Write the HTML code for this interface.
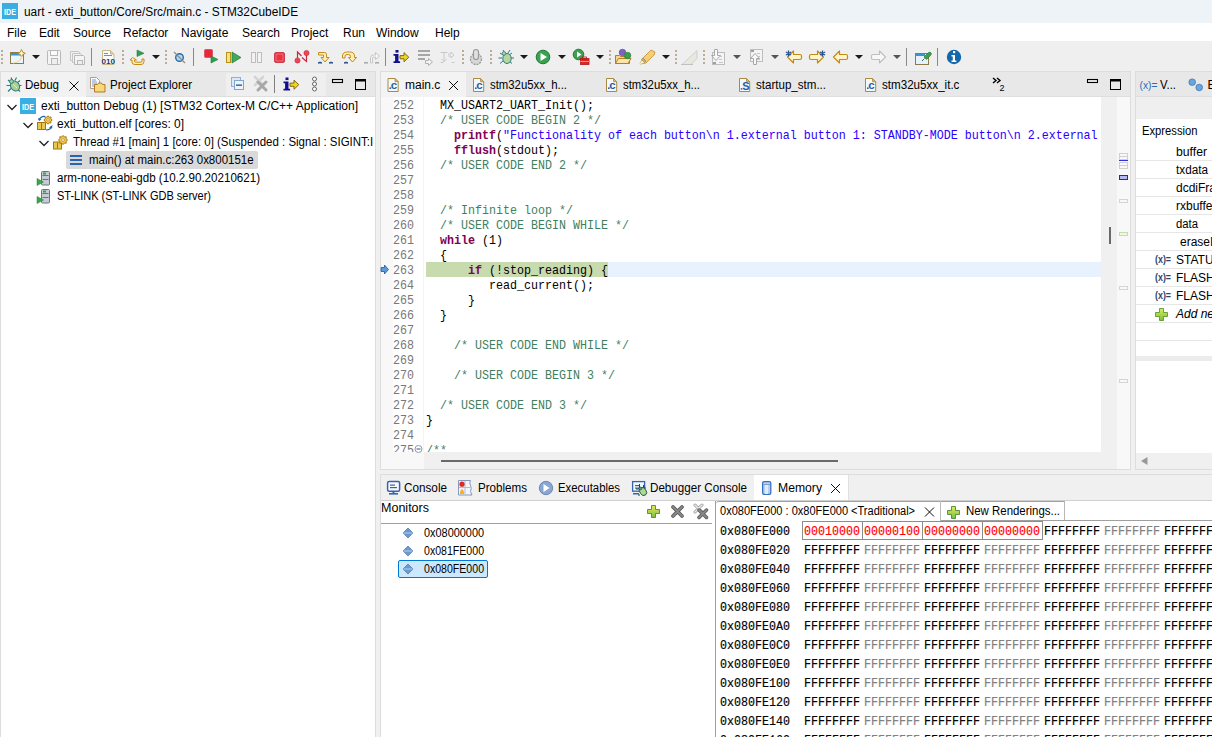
<!DOCTYPE html>
<html><head><meta charset="utf-8">
<style>
*{margin:0;padding:0;box-sizing:border-box}
html,body{width:1212px;height:737px;overflow:hidden;background:#f0f0f0;font-family:"Liberation Sans",sans-serif;font-size:12px;color:#000}
.a{position:absolute}
.t{position:absolute;white-space:pre;line-height:16px;font-size:12px}
.mb{position:absolute;white-space:pre;font-family:"Liberation Mono",monospace;font-size:11.9px;line-height:15px;transform:scaleX(0.9804);transform-origin:0 0;-webkit-text-stroke:0.15px currentColor}
.m{position:absolute;white-space:pre;font-family:"Liberation Mono",monospace;font-size:11.9px;line-height:15px;transform:scaleX(0.9804);transform-origin:0 0}
svg{position:absolute;overflow:visible}
</style></head><body>
<div class="a" style="left:0px;top:0px;width:1212px;height:23px;background:#eef3f8;"></div>
<div class="a" style="left:0px;top:23px;width:1212px;height:18px;background:#ffffff;"></div>
<div class="a" style="left:0px;top:41px;width:1212px;height:30px;background:#efefef;"></div>
<div class="a" style="left:2px;top:3px;width:16px;height:16px;background:#3aaee3;"></div>
<svg style="left:2px;top:3px;" width="16" height="16" viewBox="0 0 16 16"><text x="8" y="12" text-anchor="middle" font-family="Liberation Sans" font-weight="bold" font-size="8.5" fill="#fff" textLength="12" lengthAdjust="spacingAndGlyphs">IDE</text></svg>
<div class="t" style="left:24px;top:4px;transform:scaleX(0.9878);transform-origin:0 0;">uart - exti_button/Core/Src/main.c - STM32CubeIDE</div>
<div class="t" style="left:7px;top:25px;">File</div>
<div class="t" style="left:39px;top:25px;">Edit</div>
<div class="t" style="left:73px;top:25px;">Source</div>
<div class="t" style="left:123px;top:25px;">Refactor</div>
<div class="t" style="left:181px;top:25px;">Navigate</div>
<div class="t" style="left:242px;top:25px;">Search</div>
<div class="t" style="left:291px;top:25px;">Project</div>
<div class="t" style="left:343px;top:25px;">Run</div>
<div class="t" style="left:376px;top:25px;">Window</div>
<div class="t" style="left:435px;top:25px;">Help</div>
<div class="a" style="left:0px;top:71px;width:376px;height:700px;background:#fff;border:1px solid #dddddd"></div>
<div class="a" style="left:1px;top:72px;width:374px;height:25px;background:#e8e8e8;"></div>
<div class="a" style="left:1px;top:72px;width:85px;height:25px;background:#f2f2f2;"></div>
<div class="a" style="left:226px;top:73px;width:100px;height:23px;background:#efefef;"></div>
<div class="a" style="left:86px;top:96px;width:289px;height:1px;background:#dedede;"></div>
<div class="t" style="left:25px;top:77px;transform:scaleX(0.9616);transform-origin:0 0;">Debug</div>
<div class="t" style="left:110px;top:77px;transform:scaleX(0.9606);transform-origin:0 0;">Project Explorer</div>
<div class="a" style="left:66px;top:151px;width:192px;height:18px;background:#d9d9d9;border-radius:2px"></div>
<div class="t" style="left:41px;top:98px;transform:scaleX(1.0028);transform-origin:0 0;">exti_button Debug (1) [STM32 Cortex-M C/C++ Application]</div>
<div class="t" style="left:57px;top:116px;transform:scaleX(0.9973);transform-origin:0 0;">exti_button.elf [cores: 0]</div>
<div class="t" style="left:73px;top:134px;transform:scaleX(0.9554);transform-origin:0 0;">Thread #1 [main] 1 [core: 0] (Suspended : Signal : SIGINT:I</div>
<div class="t" style="left:89px;top:152px;transform:scaleX(0.9560);transform-origin:0 0;">main() at main.c:263 0x800151e</div>
<div class="t" style="left:57px;top:170px;transform:scaleX(0.9662);transform-origin:0 0;">arm-none-eabi-gdb (10.2.90.20210621)</div>
<div class="t" style="left:57px;top:188px;transform:scaleX(0.9166);transform-origin:0 0;">ST-LINK (ST-LINK GDB server)</div>
<div class="a" style="left:380px;top:71px;width:751px;height:399px;background:#fff;border:1px solid #dddddd"></div>
<div class="a" style="left:381px;top:72px;width:749px;height:25px;background:#e8e8e8;"></div>
<div class="a" style="left:381px;top:72px;width:85px;height:25px;background:#f3f3f3;"></div>
<div class="a" style="left:381px;top:97px;width:12px;height:355px;background:#f8f8f8;"></div>
<div class="a" style="left:423px;top:97px;width:1px;height:355px;background:#f4f4f4;"></div>
<div class="a" style="left:381px;top:452px;width:43px;height:17px;background:#f8f8f8;"></div>
<div class="a" style="left:424px;top:452px;width:677px;height:17px;background:#f0f0f0;"></div>
<div class="a" style="left:1101px;top:97px;width:16px;height:372px;background:#f0f0f0;"></div>
<div class="a" style="left:1117px;top:97px;width:13px;height:372px;background:#f8f8f8;"></div>
<div class="a" style="left:466px;top:96px;width:664px;height:1px;background:#dedede;"></div>
<div class="t" style="left:405px;top:77px;transform:scaleX(0.9988);transform-origin:0 0;">main.c</div>
<div class="t" style="left:490px;top:77px;transform:scaleX(0.9466);transform-origin:0 0;">stm32u5xx_h...</div>
<div class="t" style="left:623px;top:77px;transform:scaleX(0.9466);transform-origin:0 0;">stm32u5xx_h...</div>
<div class="t" style="left:756px;top:77px;transform:scaleX(0.9634);transform-origin:0 0;">startup_stm...</div>
<div class="t" style="left:882px;top:77px;transform:scaleX(0.9673);transform-origin:0 0;">stm32u5xx_it.c</div>
<div class="a" style="left:426px;top:262px;width:182px;height:15px;background:#c7dbaf;"></div>
<div class="a" style="left:608px;top:262px;width:493px;height:15px;background:#e8f2fe;"></div>
<div class="a" style="left:381px;top:97px;width:720px;height:355px;overflow:hidden">
<div class="m" style="left:12px;top:2px;width:21px;text-align:right;color:#787878">252</div>
<div class="m" style="left:45px;top:2px">  MX_USART2_UART_Init();</div>
<div class="m" style="left:12px;top:17px;width:21px;text-align:right;color:#787878">253</div>
<div class="m" style="left:45px;top:17px"><span style="color:#3f7f5f">  /* USER CODE BEGIN 2 */</span></div>
<div class="m" style="left:12px;top:32px;width:21px;text-align:right;color:#787878">254</div>
<div class="m" style="left:45px;top:32px">    <span style="color:#7f0055;font-weight:bold">printf</span>(<span style="color:#2a00ff">&quot;Functionality of each button\n 1.external button 1: STANDBY-MODE button\n 2.external</span></div>
<div class="m" style="left:12px;top:47px;width:21px;text-align:right;color:#787878">255</div>
<div class="m" style="left:45px;top:47px">    <span style="color:#7f0055;font-weight:bold">fflush</span>(stdout);</div>
<div class="m" style="left:12px;top:62px;width:21px;text-align:right;color:#787878">256</div>
<div class="m" style="left:45px;top:62px"><span style="color:#3f7f5f">  /* USER CODE END 2 */</span></div>
<div class="m" style="left:12px;top:77px;width:21px;text-align:right;color:#787878">257</div>
<div class="m" style="left:45px;top:77px"></div>
<div class="m" style="left:12px;top:92px;width:21px;text-align:right;color:#787878">258</div>
<div class="m" style="left:45px;top:92px"></div>
<div class="m" style="left:12px;top:107px;width:21px;text-align:right;color:#787878">259</div>
<div class="m" style="left:45px;top:107px"><span style="color:#3f7f5f">  /* Infinite loop */</span></div>
<div class="m" style="left:12px;top:122px;width:21px;text-align:right;color:#787878">260</div>
<div class="m" style="left:45px;top:122px"><span style="color:#3f7f5f">  /* USER CODE BEGIN WHILE */</span></div>
<div class="m" style="left:12px;top:137px;width:21px;text-align:right;color:#787878">261</div>
<div class="m" style="left:45px;top:137px">  <span style="color:#7f0055;font-weight:bold">while</span> (1)</div>
<div class="m" style="left:12px;top:152px;width:21px;text-align:right;color:#787878">262</div>
<div class="m" style="left:45px;top:152px">  {</div>
<div class="m" style="left:12px;top:167px;width:21px;text-align:right;color:#787878">263</div>
<div class="m" style="left:45px;top:167px">      <span style="color:#7f0055;font-weight:bold">if</span> (!stop_reading) {</div>
<div class="m" style="left:12px;top:182px;width:21px;text-align:right;color:#787878">264</div>
<div class="m" style="left:45px;top:182px">         read_current();</div>
<div class="m" style="left:12px;top:197px;width:21px;text-align:right;color:#787878">265</div>
<div class="m" style="left:45px;top:197px">      }</div>
<div class="m" style="left:12px;top:212px;width:21px;text-align:right;color:#787878">266</div>
<div class="m" style="left:45px;top:212px">  }</div>
<div class="m" style="left:12px;top:227px;width:21px;text-align:right;color:#787878">267</div>
<div class="m" style="left:45px;top:227px"></div>
<div class="m" style="left:12px;top:242px;width:21px;text-align:right;color:#787878">268</div>
<div class="m" style="left:45px;top:242px"><span style="color:#3f7f5f">    /* USER CODE END WHILE */</span></div>
<div class="m" style="left:12px;top:257px;width:21px;text-align:right;color:#787878">269</div>
<div class="m" style="left:45px;top:257px"></div>
<div class="m" style="left:12px;top:272px;width:21px;text-align:right;color:#787878">270</div>
<div class="m" style="left:45px;top:272px"><span style="color:#3f7f5f">    /* USER CODE BEGIN 3 */</span></div>
<div class="m" style="left:12px;top:287px;width:21px;text-align:right;color:#787878">271</div>
<div class="m" style="left:45px;top:287px"></div>
<div class="m" style="left:12px;top:302px;width:21px;text-align:right;color:#787878">272</div>
<div class="m" style="left:45px;top:302px"><span style="color:#3f7f5f">  /* USER CODE END 3 */</span></div>
<div class="m" style="left:12px;top:317px;width:21px;text-align:right;color:#787878">273</div>
<div class="m" style="left:45px;top:317px">}</div>
<div class="m" style="left:12px;top:332px;width:21px;text-align:right;color:#787878">274</div>
<div class="m" style="left:45px;top:332px"></div>
<div class="m" style="left:12px;top:347px;width:21px;text-align:right;color:#787878">275</div>
<div class="m" style="left:45px;top:347px"><span style="color:#3f7f5f">/**</span></div>
</div>
<div class="a" style="left:1135px;top:71px;width:100px;height:399px;background:#fff;border:1px solid #dddddd"></div>
<div class="a" style="left:1136px;top:72px;width:90px;height:25px;background:#e8e8e8;"></div>
<div class="a" style="left:1136px;top:96px;width:90px;height:1px;background:#dedede;"></div>
<div class="a" style="left:1136px;top:97px;width:90px;height:22px;background:#efefef;"></div>
<div class="t" style="left:1142px;top:123px;transform:scaleX(0.9350);transform-origin:0 0;">Expression</div>
<div class="a" style="left:1136px;top:160px;width:80px;height:1px;background:#e6e6e6;"></div>
<div class="a" style="left:1136px;top:178px;width:80px;height:1px;background:#e6e6e6;"></div>
<div class="a" style="left:1136px;top:196px;width:80px;height:1px;background:#e6e6e6;"></div>
<div class="a" style="left:1136px;top:214px;width:80px;height:1px;background:#e6e6e6;"></div>
<div class="a" style="left:1136px;top:232px;width:80px;height:1px;background:#e6e6e6;"></div>
<div class="a" style="left:1136px;top:250px;width:80px;height:1px;background:#e6e6e6;"></div>
<div class="a" style="left:1136px;top:268px;width:80px;height:1px;background:#e6e6e6;"></div>
<div class="a" style="left:1136px;top:286px;width:80px;height:1px;background:#e6e6e6;"></div>
<div class="a" style="left:1136px;top:304px;width:80px;height:1px;background:#e6e6e6;"></div>
<div class="a" style="left:1136px;top:322px;width:80px;height:1px;background:#e6e6e6;"></div>
<div class="a" style="left:1136px;top:340px;width:80px;height:1px;background:#e6e6e6;"></div>
<div class="a" style="left:1136px;top:356px;width:80px;height:5px;background:#ececec;"></div>
<div class="a" style="left:1136px;top:453px;width:80px;height:16px;background:#f0f0f0;"></div>
<svg style="left:1141px;top:457px;" width="7" height="8" viewBox="0 0 7 8"><path d="M6.5 0 L0 4 L6.5 8Z" fill="#999"/></svg>
<div class="t" style="left:1176px;top:144px;transform:scaleX(1.0180);transform-origin:0 0;">buffer</div>
<div class="t" style="left:1176px;top:162px;transform:scaleX(0.9794);transform-origin:0 0;">txdata</div>
<div class="t" style="left:1176px;top:180px;">dcdiFrame</div>
<div class="t" style="left:1176px;top:198px;">rxbuffer</div>
<div class="t" style="left:1176px;top:216px;transform:scaleX(0.9424);transform-origin:0 0;">data</div>
<div class="t" style="left:1180px;top:234px;">eraseInit</div>
<div class="t" style="left:1176px;top:252px;">STATUS_X</div>
<div class="t" style="left:1176px;top:270px;">FLASH_X</div>
<div class="t" style="left:1176px;top:288px;">FLASH_X</div>
<div class="t" style="left:1176px;top:306px;font-style:italic;">Add new expression</div>
<div class="a" style="left:380px;top:474px;width:850px;height:270px;background:#fff;border:1px solid #dddddd"></div>
<div class="a" style="left:381px;top:475px;width:840px;height:25px;background:#f0f0f0;"></div>
<div class="a" style="left:754px;top:475px;width:94px;height:25px;background:#ffffff;"></div>
<div class="a" style="left:848px;top:475px;width:1px;height:25px;background:#e0e0e0;"></div>
<div class="a" style="left:381px;top:500px;width:840px;height:1px;background:#cfcfcf;"></div>
<div class="t" style="left:404px;top:480px;transform:scaleX(0.9766);transform-origin:0 0;">Console</div>
<div class="t" style="left:478px;top:480px;transform:scaleX(0.9667);transform-origin:0 0;">Problems</div>
<div class="t" style="left:558px;top:480px;transform:scaleX(0.9486);transform-origin:0 0;">Executables</div>
<div class="t" style="left:650px;top:480px;transform:scaleX(0.9694);transform-origin:0 0;">Debugger Console</div>
<div class="t" style="left:778px;top:480px;transform:scaleX(1.0151);transform-origin:0 0;">Memory</div>
<div class="t" style="left:381px;top:500px;transform:scaleX(1.0431);transform-origin:0 0;">Monitors</div>
<div class="a" style="left:381px;top:523px;width:331px;height:1px;background:#a0a0a0;"></div>
<div class="a" style="left:398px;top:560px;width:90px;height:18px;background:#cce8ff;border:1px solid #0078d7;border-radius:2px"></div>
<div class="t" style="left:424px;top:525px;transform:scaleX(0.9084);transform-origin:0 0;">0x08000000</div>
<div class="t" style="left:424px;top:543px;transform:scaleX(0.8819);transform-origin:0 0;">0x081FE000</div>
<div class="t" style="left:424px;top:561px;transform:scaleX(0.8819);transform-origin:0 0;">0x080FE000</div>
<div class="a" style="left:715px;top:501px;width:500px;height:240px;background:#fff;border-left:1px solid #a0a0a0"></div>
<div class="a" style="left:716px;top:501px;width:225px;height:20px;background:#fff;border-top:1px solid #a0a0a0;border-right:1px solid #b8b8b8;border-top-left-radius:3px"></div>
<div class="a" style="left:941px;top:501px;width:124px;height:20px;background:#fff;border-top:1px solid #a0a0a0;border-right:1px solid #b8b8b8"></div>
<div class="a" style="left:941px;top:520px;width:280px;height:1px;background:#a0a0a0;"></div>
<div class="t" style="left:720px;top:503px;transform:scaleX(0.9184);transform-origin:0 0;">0x080FE000 : 0x80FE000 &lt;Traditional&gt;</div>
<div class="t" style="left:966px;top:503px;transform:scaleX(0.9524);transform-origin:0 0;">New Renderings...</div>
<div class="a" style="left:802px;top:521px;width:241px;height:19px;background:#fff;border:1px solid #8c8c8c"></div>
<div class="a" style="left:862px;top:521px;width:1px;height:19px;background:#8c8c8c;"></div>
<div class="a" style="left:922px;top:521px;width:1px;height:19px;background:#8c8c8c;"></div>
<div class="a" style="left:982px;top:521px;width:1px;height:19px;background:#8c8c8c;"></div>
<div class="mb" style="left:720px;top:525px">0x080FE000</div>
<div class="mb" style="left:804px;top:525px"><span style="color:#ff0000">00010000</span></div>
<div class="mb" style="left:864px;top:525px"><span style="color:#ff0000">00000100</span></div>
<div class="mb" style="left:924px;top:525px"><span style="color:#ff0000">00000000</span></div>
<div class="mb" style="left:984px;top:525px"><span style="color:#ff0000">00000000</span></div>
<div class="mb" style="left:1044px;top:525px"><span style="color:#000">FFFFFFFF</span></div>
<div class="mb" style="left:1104px;top:525px"><span style="color:#808080">FFFFFFFF</span></div>
<div class="mb" style="left:1164px;top:525px"><span style="color:#000">FFFFFFFF</span></div>
<div class="mb" style="left:720px;top:544px">0x080FE020</div>
<div class="mb" style="left:804px;top:544px"><span style="color:#000">FFFFFFFF</span></div>
<div class="mb" style="left:864px;top:544px"><span style="color:#808080">FFFFFFFF</span></div>
<div class="mb" style="left:924px;top:544px"><span style="color:#000">FFFFFFFF</span></div>
<div class="mb" style="left:984px;top:544px"><span style="color:#808080">FFFFFFFF</span></div>
<div class="mb" style="left:1044px;top:544px"><span style="color:#000">FFFFFFFF</span></div>
<div class="mb" style="left:1104px;top:544px"><span style="color:#808080">FFFFFFFF</span></div>
<div class="mb" style="left:1164px;top:544px"><span style="color:#000">FFFFFFFF</span></div>
<div class="mb" style="left:720px;top:563px">0x080FE040</div>
<div class="mb" style="left:804px;top:563px"><span style="color:#000">FFFFFFFF</span></div>
<div class="mb" style="left:864px;top:563px"><span style="color:#808080">FFFFFFFF</span></div>
<div class="mb" style="left:924px;top:563px"><span style="color:#000">FFFFFFFF</span></div>
<div class="mb" style="left:984px;top:563px"><span style="color:#808080">FFFFFFFF</span></div>
<div class="mb" style="left:1044px;top:563px"><span style="color:#000">FFFFFFFF</span></div>
<div class="mb" style="left:1104px;top:563px"><span style="color:#808080">FFFFFFFF</span></div>
<div class="mb" style="left:1164px;top:563px"><span style="color:#000">FFFFFFFF</span></div>
<div class="mb" style="left:720px;top:582px">0x080FE060</div>
<div class="mb" style="left:804px;top:582px"><span style="color:#000">FFFFFFFF</span></div>
<div class="mb" style="left:864px;top:582px"><span style="color:#808080">FFFFFFFF</span></div>
<div class="mb" style="left:924px;top:582px"><span style="color:#000">FFFFFFFF</span></div>
<div class="mb" style="left:984px;top:582px"><span style="color:#808080">FFFFFFFF</span></div>
<div class="mb" style="left:1044px;top:582px"><span style="color:#000">FFFFFFFF</span></div>
<div class="mb" style="left:1104px;top:582px"><span style="color:#808080">FFFFFFFF</span></div>
<div class="mb" style="left:1164px;top:582px"><span style="color:#000">FFFFFFFF</span></div>
<div class="mb" style="left:720px;top:601px">0x080FE080</div>
<div class="mb" style="left:804px;top:601px"><span style="color:#000">FFFFFFFF</span></div>
<div class="mb" style="left:864px;top:601px"><span style="color:#808080">FFFFFFFF</span></div>
<div class="mb" style="left:924px;top:601px"><span style="color:#000">FFFFFFFF</span></div>
<div class="mb" style="left:984px;top:601px"><span style="color:#808080">FFFFFFFF</span></div>
<div class="mb" style="left:1044px;top:601px"><span style="color:#000">FFFFFFFF</span></div>
<div class="mb" style="left:1104px;top:601px"><span style="color:#808080">FFFFFFFF</span></div>
<div class="mb" style="left:1164px;top:601px"><span style="color:#000">FFFFFFFF</span></div>
<div class="mb" style="left:720px;top:620px">0x080FE0A0</div>
<div class="mb" style="left:804px;top:620px"><span style="color:#000">FFFFFFFF</span></div>
<div class="mb" style="left:864px;top:620px"><span style="color:#808080">FFFFFFFF</span></div>
<div class="mb" style="left:924px;top:620px"><span style="color:#000">FFFFFFFF</span></div>
<div class="mb" style="left:984px;top:620px"><span style="color:#808080">FFFFFFFF</span></div>
<div class="mb" style="left:1044px;top:620px"><span style="color:#000">FFFFFFFF</span></div>
<div class="mb" style="left:1104px;top:620px"><span style="color:#808080">FFFFFFFF</span></div>
<div class="mb" style="left:1164px;top:620px"><span style="color:#000">FFFFFFFF</span></div>
<div class="mb" style="left:720px;top:639px">0x080FE0C0</div>
<div class="mb" style="left:804px;top:639px"><span style="color:#000">FFFFFFFF</span></div>
<div class="mb" style="left:864px;top:639px"><span style="color:#808080">FFFFFFFF</span></div>
<div class="mb" style="left:924px;top:639px"><span style="color:#000">FFFFFFFF</span></div>
<div class="mb" style="left:984px;top:639px"><span style="color:#808080">FFFFFFFF</span></div>
<div class="mb" style="left:1044px;top:639px"><span style="color:#000">FFFFFFFF</span></div>
<div class="mb" style="left:1104px;top:639px"><span style="color:#808080">FFFFFFFF</span></div>
<div class="mb" style="left:1164px;top:639px"><span style="color:#000">FFFFFFFF</span></div>
<div class="mb" style="left:720px;top:658px">0x080FE0E0</div>
<div class="mb" style="left:804px;top:658px"><span style="color:#000">FFFFFFFF</span></div>
<div class="mb" style="left:864px;top:658px"><span style="color:#808080">FFFFFFFF</span></div>
<div class="mb" style="left:924px;top:658px"><span style="color:#000">FFFFFFFF</span></div>
<div class="mb" style="left:984px;top:658px"><span style="color:#808080">FFFFFFFF</span></div>
<div class="mb" style="left:1044px;top:658px"><span style="color:#000">FFFFFFFF</span></div>
<div class="mb" style="left:1104px;top:658px"><span style="color:#808080">FFFFFFFF</span></div>
<div class="mb" style="left:1164px;top:658px"><span style="color:#000">FFFFFFFF</span></div>
<div class="mb" style="left:720px;top:677px">0x080FE100</div>
<div class="mb" style="left:804px;top:677px"><span style="color:#000">FFFFFFFF</span></div>
<div class="mb" style="left:864px;top:677px"><span style="color:#808080">FFFFFFFF</span></div>
<div class="mb" style="left:924px;top:677px"><span style="color:#000">FFFFFFFF</span></div>
<div class="mb" style="left:984px;top:677px"><span style="color:#808080">FFFFFFFF</span></div>
<div class="mb" style="left:1044px;top:677px"><span style="color:#000">FFFFFFFF</span></div>
<div class="mb" style="left:1104px;top:677px"><span style="color:#808080">FFFFFFFF</span></div>
<div class="mb" style="left:1164px;top:677px"><span style="color:#000">FFFFFFFF</span></div>
<div class="mb" style="left:720px;top:696px">0x080FE120</div>
<div class="mb" style="left:804px;top:696px"><span style="color:#000">FFFFFFFF</span></div>
<div class="mb" style="left:864px;top:696px"><span style="color:#808080">FFFFFFFF</span></div>
<div class="mb" style="left:924px;top:696px"><span style="color:#000">FFFFFFFF</span></div>
<div class="mb" style="left:984px;top:696px"><span style="color:#808080">FFFFFFFF</span></div>
<div class="mb" style="left:1044px;top:696px"><span style="color:#000">FFFFFFFF</span></div>
<div class="mb" style="left:1104px;top:696px"><span style="color:#808080">FFFFFFFF</span></div>
<div class="mb" style="left:1164px;top:696px"><span style="color:#000">FFFFFFFF</span></div>
<div class="mb" style="left:720px;top:715px">0x080FE140</div>
<div class="mb" style="left:804px;top:715px"><span style="color:#000">FFFFFFFF</span></div>
<div class="mb" style="left:864px;top:715px"><span style="color:#808080">FFFFFFFF</span></div>
<div class="mb" style="left:924px;top:715px"><span style="color:#000">FFFFFFFF</span></div>
<div class="mb" style="left:984px;top:715px"><span style="color:#808080">FFFFFFFF</span></div>
<div class="mb" style="left:1044px;top:715px"><span style="color:#000">FFFFFFFF</span></div>
<div class="mb" style="left:1104px;top:715px"><span style="color:#808080">FFFFFFFF</span></div>
<div class="mb" style="left:1164px;top:715px"><span style="color:#000">FFFFFFFF</span></div>
<div class="mb" style="left:720px;top:734px">0x080FE160</div>
<div class="mb" style="left:804px;top:734px"><span style="color:#000">FFFFFFFF</span></div>
<div class="mb" style="left:864px;top:734px"><span style="color:#808080">FFFFFFFF</span></div>
<div class="mb" style="left:924px;top:734px"><span style="color:#000">FFFFFFFF</span></div>
<div class="mb" style="left:984px;top:734px"><span style="color:#808080">FFFFFFFF</span></div>
<div class="mb" style="left:1044px;top:734px"><span style="color:#000">FFFFFFFF</span></div>
<div class="mb" style="left:1104px;top:734px"><span style="color:#808080">FFFFFFFF</span></div>
<div class="mb" style="left:1164px;top:734px"><span style="color:#000">FFFFFFFF</span></div>
<svg style="left:0;top:0" width="1212" height="737"><rect x="1" y="50" width="2" height="2" fill="#b9ad98"/><rect x="1" y="54" width="2" height="2" fill="#b9ad98"/><rect x="1" y="58" width="2" height="2" fill="#b9ad98"/><rect x="1" y="62" width="2" height="2" fill="#b9ad98"/><rect x="10.5" y="52.5" width="13" height="11" fill="#eaf5fc" stroke="#8c7a48"/><rect x="11" y="53" width="10" height="2.5" fill="#3a93d2"/><path d="M21.5 49.5 l1.2 2.6 2.6 1.2 -2.6 1.2 -1.2 2.6 -1.2 -2.6 -2.6 -1.2 2.6 -1.2z" fill="#fff6cc" stroke="#b8902a" stroke-width="1"/><path d="M13 63 q8 -1 9 -7" stroke="#f0dc9a" fill="none" stroke-width="1.2"/><path d="M32 55 h8 l-4 4z" fill="#1a1a1a"/><path d="M47.5 51.5 q0 -1 1 -1 h11 q1 0 1 1 v12 q0 1 -1 1 h-11 q-1 0 -1 -1z" fill="#f4f4f4" stroke="#b8b8b8"/><rect x="50.5" y="50.5" width="7" height="5" fill="#fafafa" stroke="#b8b8b8"/><rect x="51.5" y="58.5" width="6" height="6" fill="#eee" stroke="#b8b8b8"/><path d="M70.5 51.5 h8 l2 2 v7 h-10z" fill="#f2f2f2" stroke="#c4c4c4"/><path d="M72.5 53.5 h8 l2 2 v7 h-10z" fill="#f2f2f2" stroke="#c4c4c4"/><path d="M74.5 55.5 h9 l1 1 v8 h-10z" fill="#f4f4f4" stroke="#b8b8b8"/><rect x="77.5" y="60.5" width="5" height="4" fill="#eee" stroke="#b8b8b8"/><rect x="91" y="48" width="1" height="18" fill="#8a8a8a"/><path d="M102.5 50.5 h8 l3.5 3.5 v10.5 h-11.5z" fill="#f7fbff" stroke="#c8b989"/><path d="M110.5 50.5 v3.5 h3.5" fill="#e7d28a" stroke="#c8b989"/><rect x="104" y="53" width="4" height="1" fill="#7190c0"/><rect x="104" y="55" width="8" height="1" fill="#7190c0"/><text x="101.5" y="64" font-family="Liberation Sans" font-weight="bold" font-size="7" fill="#1f3b73" textLength="13.5" lengthAdjust="spacingAndGlyphs">010</text><rect x="122" y="50" width="2" height="2" fill="#b9ad98"/><rect x="122" y="54" width="2" height="2" fill="#b9ad98"/><rect x="122" y="58" width="2" height="2" fill="#b9ad98"/><rect x="122" y="62" width="2" height="2" fill="#b9ad98"/><path d="M137 50 v6.5 l7 -3.2z" fill="#2f9e4f" stroke="#238040" stroke-width=".6"/><path d="M132.5 57.5 l-2.5 2.5 h2 v2 q0 2.5 3 2.5 h6 q3 0 3 -3 v-2.5 h-2 v2.2 q0 1 -1 1 h-5.5 q-1 0 -1 -1 v-1.2 h2z" fill="#fff2c0" stroke="#c48a18" stroke-width="1"/><path d="M152 55 h8 l-4 4z" fill="#1a1a1a"/><rect x="165" y="50" width="2" height="2" fill="#b9ad98"/><rect x="165" y="54" width="2" height="2" fill="#b9ad98"/><rect x="165" y="58" width="2" height="2" fill="#b9ad98"/><rect x="165" y="62" width="2" height="2" fill="#b9ad98"/><circle cx="179.5" cy="57.5" r="3.8" fill="#bcd8ee" stroke="#1f6eae" stroke-width="1.4"/><path d="M174 52 L185 63" stroke="#8c8c8c" stroke-width="1.2"/><rect x="193" y="48" width="1" height="18" fill="#8a8a8a"/><rect x="204.5" y="49.5" width="8" height="8" rx="1" fill="#e8283a" stroke="#d9596a"/><path d="M211 56 v7 l7 -3.5z" fill="#2f9e4f" stroke="#227a3d" stroke-width=".6"/><rect x="226.5" y="52.5" width="4" height="10" fill="#f8e27a" stroke="#b8901c"/><path d="M232 52 v11 l9 -5.5z" fill="#43a85c" stroke="#227a3d" stroke-width=".7"/><rect x="251.5" y="52.5" width="4" height="10" fill="#f2f2f2" stroke="#bdbdbd"/><rect x="257.5" y="52.5" width="4" height="10" fill="#f2f2f2" stroke="#bdbdbd"/><rect x="274.5" y="52.5" width="10" height="10" rx="1.5" fill="#e8283a" stroke="#cf3c4c"/><rect x="276" y="54" width="7" height="7" fill="#ee3040" stroke="#f4a0a8" stroke-width=".6"/><path d="M297.5 60.5 L297.5 52 L301.5 56 M302 57.5 L306.5 61.5 L306.5 53" stroke="#c8283a" stroke-width="1.2" fill="none"/><circle cx="297.5" cy="60.5" r="2.6" fill="#e84858" stroke="#c8283a" stroke-width=".6"/><circle cx="306.5" cy="53" r="2.6" fill="#e84858" stroke="#c8283a" stroke-width=".6"/><path d="M318.5 52.5 h6 q2 0 2 2 v3 h2.5 l-4 4.5 l-4 -4.5 h2.5 v-2.5 h-5z" fill="#fff0b8" stroke="#c48a18"/><path d="M318 63 q2 -2 4 0z M329 63 q2 -2 4 0z" fill="#2a5590" stroke="#2a5590" stroke-width="1"/><path d="M342.5 58 v-2 q0 -4 5 -4 h2 q5 0 5 4 v1.5 h2 l-4 4.5 l-4 -4.5 h2 v-1 q0 -2 -2 -2 h-1.5 q-2 0 -2 2 v1.5z" fill="#fff0b8" stroke="#c48a18"/><path d="M344 63 q2 -2 4 0z" fill="#2a5590" stroke="#2a5590" stroke-width="1"/><path d="M370.5 63 v-5 q0 -3 3 -3 h2 v-2.5 l4 3.5 l-4 3.5 v-2.5 h-2 q-1 0 -1 1 v5z" fill="#f6f6f6" stroke="#c6c6c6"/><path d="M364 63 q2 -1.5 4 0z M375 63 q2 -1.5 4 0z" fill="#a8a8a8" stroke="#a8a8a8" stroke-width="1"/><rect x="385" y="48" width="1" height="18" fill="#8a8a8a"/><g transform="translate(393,50)"><rect x="2.5" y="0" width="3" height="2.6" fill="#10108c"/><path d="M0.5 4 h5 v7.2 h1.6 v1.8 h-6.6 v-1.8 h1.6 v-5.4 h-1.6z" fill="#10108c"/><path d="M7 5.6 h4 v-3 l4.8 4.6 l-4.8 4.6 v-3 h-4z" fill="#e8d820" stroke="#7a5a10" stroke-width=".9" stroke-linejoin="round"/></g><rect x="418" y="50" width="12" height="2" fill="#a6a6a6"/><rect x="418" y="54" width="12" height="2" fill="#a6a6a6"/><rect x="418" y="58" width="7" height="2" fill="#a6a6a6"/><path d="M425.5 60.5 h3 v-2 l4 3.5 l-4 3.5 v-2 h-3z" fill="#f4f4f4" stroke="#b0b0b0"/><path d="M440.5 52.5 h7 M444 52.5 v9 M441.5 59 l2.5 2.5 2.5 -2.5 M448 54 h3 v-2 l3 3 -3 3 v-2 h-3" stroke="#c8c8c8" fill="none"/><path d="M440 63 q2 -1.5 4 0z M451 63 q2 -1.5 4 0z" fill="#b0b0b0"/><rect x="462" y="50" width="2" height="2" fill="#b9ad98"/><rect x="462" y="54" width="2" height="2" fill="#b9ad98"/><rect x="462" y="58" width="2" height="2" fill="#b9ad98"/><rect x="462" y="62" width="2" height="2" fill="#b9ad98"/><circle cx="476" cy="59" r="5.5" fill="#d8d8d8" stroke="#9a9a9a" stroke-width="1.3" stroke-dasharray="2 1"/><rect x="473.5" y="49.5" width="5" height="10" rx="2.5" fill="#e0e0e0" stroke="#9a9a9a" stroke-width="1.2"/><rect x="490" y="50" width="2" height="2" fill="#b9ad98"/><rect x="490" y="54" width="2" height="2" fill="#b9ad98"/><rect x="490" y="58" width="2" height="2" fill="#b9ad98"/><rect x="490" y="62" width="2" height="2" fill="#b9ad98"/><g stroke="#2b7a86" stroke-width="1" fill="none"><path d="M500 53 l3 2 M512 53 l-3 2 M498.5 58 h3.5 M514 58 h-3.5 M500 63.5 l3 -2.5 M512 63.5 l-3 -2.5 M503 50 l2 3 M510 50 l-2 3"/></g><ellipse cx="507" cy="58.5" rx="4.2" ry="5" fill="#b6d6a0" stroke="#2b7a86" stroke-width="1"/><circle cx="504" cy="53.5" r="1.8" fill="#b6d6a0" stroke="#2b7a86" stroke-width=".8"/><path d="M520 55 h8 l-4 4z" fill="#1a1a1a"/><circle cx="543" cy="57" r="6.8" fill="#3aa150" stroke="#1f7a34" stroke-width="1"/><path d="M540.5 53 v8 l6.5 -4z" fill="#fff"/><path d="M558 55 h8 l-4 4z" fill="#1a1a1a"/><circle cx="578.5" cy="54.5" r="5.3" fill="#3aa150" stroke="#1f7a34" stroke-width="1"/><path d="M577 51.5 v6 l4.5 -3z" fill="#fff"/><rect x="580.5" y="58.5" width="8.5" height="6" fill="#e02424" stroke="#b01818" stroke-width=".8"/><rect x="582.5" y="57" width="4" height="2" fill="none" stroke="#b01818" stroke-width=".8"/><rect x="580.5" y="61" width="8.5" height="1" fill="#ff9090"/><path d="M596 55 h8 l-4 4z" fill="#1a1a1a"/><rect x="609" y="50" width="2" height="2" fill="#b9ad98"/><rect x="609" y="54" width="2" height="2" fill="#b9ad98"/><rect x="609" y="58" width="2" height="2" fill="#b9ad98"/><rect x="609" y="62" width="2" height="2" fill="#b9ad98"/><path d="M615.5 55.5 h4 l1 1 h9 v7 h-14z" fill="#f6d58a" stroke="#b97a2a"/><path d="M615.5 63.5 l3 -5 h12.5 l-3 5z" fill="#fbe6a8" stroke="#b97a2a"/><circle cx="622.5" cy="52.5" r="3.3" fill="#7d64c0" stroke="#5a4598" stroke-width=".6"/><circle cx="627.5" cy="55.5" r="3.3" fill="#3a9e4a" stroke="#2a7a38" stroke-width=".6"/><path d="M640 64 l3 -6 l8 -8 l4 2 l-1 3 l-8 8z" fill="#f6d070" stroke="#c08a30" stroke-width=".8"/><path d="M643 58 l3 3 l-1.5 1.5 l-3 -3z" fill="#b0b0b0" stroke="#907850" stroke-width=".6"/><path d="M639.5 64.5 l2.5 -4 l2 2z" fill="#fff8c8"/><path d="M662 55 h8 l-4 4z" fill="#1a1a1a"/><rect x="675" y="50" width="2" height="2" fill="#b9ad98"/><rect x="675" y="54" width="2" height="2" fill="#b9ad98"/><rect x="675" y="58" width="2" height="2" fill="#b9ad98"/><rect x="675" y="62" width="2" height="2" fill="#b9ad98"/><path d="M682 64.5 h9 l6 -6 v-8 z" fill="#e8e8e0" stroke="#c8c8c8" stroke-width=".8"/><path d="M681 64.5 h12" stroke="#c0c0c0"/><rect x="703" y="50" width="2" height="2" fill="#b9ad98"/><rect x="703" y="54" width="2" height="2" fill="#b9ad98"/><rect x="703" y="58" width="2" height="2" fill="#b9ad98"/><rect x="703" y="62" width="2" height="2" fill="#b9ad98"/><rect x="712.5" y="52.5" width="12" height="12" fill="#f4f4f4" stroke="#bdbdbd"/><path d="M714.5 49.5 h3 v6 h3 l-4.5 5 l-4.5 -5 h3z" fill="#f8f8f8" stroke="#a8a8a8"/><rect x="713" y="62" width="3" height="2" fill="#a0a0a0"/><path d="M719 56.5 h3 M719 59.5 h3 M719 62.5 h4" stroke="#c6c6c6"/><path d="M733 55 h8 l-4 4z" fill="#555"/><rect x="750.5" y="49.5" width="12" height="12" fill="#f4f4f4" stroke="#bdbdbd"/><path d="M753.5 64.5 h3 v-6 h3 l-4.5 -5 l-4.5 5 h3z" fill="#f8f8f8" stroke="#a8a8a8"/><rect x="751" y="50" width="3" height="2" fill="#a0a0a0"/><path d="M757 53.5 h3 M757 56.5 h3 M757 59.5 h3" stroke="#c6c6c6"/><path d="M771 55 h8 l-4 4z" fill="#555"/><path d="M787.5 57 l6 -6 v3.5 h6.5 q1.5 0 1.5 1.5 v2 q0 1.5 -1.5 1.5 h-6.5 v3.5z" fill="#fff4c8" stroke="#c48a18" stroke-width="1.2" stroke-linejoin="round"/><path d="M788.5 50.5 v6 M785.9 52.0 l5.2 3 M785.9 55.0 l5.2 -3" stroke="#2a5590" stroke-width="1.3"/><path d="M823.5 57 l-6 -6 v3.5 h-6.5 q-1.5 0 -1.5 1.5 v2 q0 1.5 1.5 1.5 h6.5 v3.5z" fill="#fff4c8" stroke="#c48a18" stroke-width="1.2" stroke-linejoin="round"/><path d="M822.5 50.5 v6 M819.9 52.0 l5.2 3 M819.9 55.0 l5.2 -3" stroke="#2a5590" stroke-width="1.3"/><path d="M833.5 57 l6 -6 v3.5 h6.5 q1.5 0 1.5 1.5 v2 q0 1.5 -1.5 1.5 h-6.5 v3.5z" fill="#fff4c8" stroke="#c48a18" stroke-width="1.2" stroke-linejoin="round"/><path d="M855 55 h8 l-4 4z" fill="#1a1a1a"/><path d="M885.5 57 l-6 -6 v3.5 h-6.5 q-1.5 0 -1.5 1.5 v2 q0 1.5 1.5 1.5 h6.5 v3.5z" fill="#f8f8f8" stroke="#c0c0c0" stroke-width="1.2" stroke-linejoin="round"/><path d="M893 55 h8 l-4 4z" fill="#555"/><rect x="906" y="48" width="1" height="18" fill="#8a8a8a"/><rect x="915.5" y="53.5" width="13" height="11" fill="#e4f2fb" stroke="#8c7a48"/><rect x="916" y="54" width="9" height="2" fill="#3a93d2"/><path d="M924 57 l4 -4 l2 -1 l1.5 1.5 l-1 2 l-4 4z" fill="#3aa04a" stroke="#1f7a34" stroke-width=".7"/><path d="M922 61 l2.5 -2.5" stroke="#333" stroke-width=".8"/><rect x="937" y="48" width="1" height="18" fill="#8a8a8a"/><circle cx="954" cy="57" r="7.2" fill="#1567ab"/><rect x="953" y="51" width="2.2" height="2.2" fill="#fff"/><path d="M951.5 55 h3.5 v5.5 h1.3 v1.5 h-4.8 v-1.5 h1.3 v-4 h-1.3z" fill="#fff"/><g transform="translate(6,77)"><g stroke="#2b7a86" stroke-width="1.1" fill="none"><path d="M2 3 l3 2.5 M14 3.5 l-3 2.5 M0.5 8.5 h4 M15.5 8.5 h-4 M2 14.5 l3 -3 M14 14.5 l-3 -3 M5 0.5 l1.5 3 M10.5 0.5 l-1.5 3"/></g><ellipse cx="9" cy="9" rx="4.3" ry="5.3" transform="rotate(-35 9 9)" fill="#a8d090" stroke="#2b7a86" stroke-width="1"/><circle cx="5.5" cy="4.5" r="2" fill="#a8d090" stroke="#2b7a86" stroke-width=".9"/><path d="M7 7 l4 4" stroke="#d8ecc8" stroke-width="1"/></g><path d="M69.5 81.5 L78.5 90.5 M78.5 81.5 L69.5 90.5" stroke="#000" stroke-width="0.95"/><path d="M90.5 77.5 h6 l3 3 v8 h-9z" fill="#f8fbff" stroke="#b0a080"/><path d="M92 80 h4 M92 82 h5 M92 84 h5 M92 86 h5" stroke="#5a80c0" stroke-width=".8"/><path d="M94.5 84.5 h3 l1 -1.5 h3 l1 1.5 h2.5 v7.5 h-10.5z" fill="#f8d878" stroke="#b07828"/><rect x="231.5" y="77.5" width="9" height="9" fill="#dfe9f5" stroke="#8eb0d8"/><rect x="234.5" y="80.5" width="9" height="9" fill="#eef4fb" stroke="#7ea4d0"/><rect x="236" y="84.5" width="6" height="1.3" fill="#1f4f98"/><path d="M255 77 l8 8 M263 77 l-8 8" stroke="#d4d4d4" stroke-width="2.6" stroke-linecap="round"/><path d="M258 82 l8 8 M266 82 l-8 8" stroke="#a8a8a8" stroke-width="3" stroke-linecap="round"/><rect x="274" y="75" width="1" height="18" fill="#808080"/><g transform="translate(283,77.5)"><rect x="2.5" y="0" width="3" height="2.6" fill="#10108c"/><path d="M0.5 4 h5 v7.2 h1.6 v1.8 h-6.6 v-1.8 h1.6 v-5.4 h-1.6z" fill="#10108c"/><path d="M7 5.6 h4 v-3 l4.8 4.6 l-4.8 4.6 v-3 h-4z" fill="#e8d820" stroke="#7a5a10" stroke-width=".9" stroke-linejoin="round"/></g><circle cx="314.5" cy="79" r="2" fill="#fff" stroke="#666" stroke-width="1"/><circle cx="314.5" cy="84" r="2" fill="#fff" stroke="#666" stroke-width="1"/><circle cx="314.5" cy="89" r="2" fill="#fff" stroke="#666" stroke-width="1"/><rect x="332.5" y="79.5" width="10" height="3" fill="none" stroke="#000" stroke-width="1.1"/><rect x="355.5" y="79.5" width="10" height="10" fill="none" stroke="#000" stroke-width="1"/><rect x="355" y="80" width="11" height="1.5" fill="#000"/><path d="M7.5 105 l4.5 4.5 l4.5 -4.5" stroke="#222" stroke-width="1.3" fill="none"/><rect x="20" y="98" width="16" height="16" fill="#3aaee3"/><text x="28" y="109.5" text-anchor="middle" font-family="Liberation Sans" font-weight="bold" font-size="8.5" fill="#fff" textLength="12" lengthAdjust="spacingAndGlyphs">IDE</text><path d="M23.5 123 l4.5 4.5 l4.5 -4.5" stroke="#222" stroke-width="1.3" fill="none"/><rect x="37.5" y="122.5" width="8" height="7" fill="#e8c850" stroke="#9a7a18"/><rect x="41" y="123" width="1" height="6" fill="#9a7a18"/><polygon points="52.20,120.00 50.79,121.16 50.97,122.97 49.16,122.79 48.00,124.20 46.84,122.79 45.03,122.97 45.21,121.16 43.80,120.00 45.21,118.84 45.03,117.03 46.84,117.21 48.00,115.80 49.16,117.21 50.97,117.03 50.79,118.84" fill="#f5c842" stroke="#a07010" stroke-width=".9" stroke-linejoin="round"/><circle cx="48" cy="120" r="1.26" fill="#fff" stroke="#a07010" stroke-width=".6"/><path d="M39 120 q2 -4 6 -3.5" stroke="#1f5fa8" stroke-width="1.2" fill="none"/><path d="M38 118 l1 3 l2.5 -1.5z" fill="#1f5fa8"/><path d="M46 130 q4 0 5.5 -3" stroke="#1f5fa8" stroke-width="1.2" fill="none"/><path d="M52.5 125 l-0.5 3.5 l-3 -1z" fill="#1f5fa8"/><path d="M39.5 141 l4.5 4.5 l4.5 -4.5" stroke="#222" stroke-width="1.3" fill="none"/><rect x="53.5" y="142.0" width="8" height="7" fill="#e8c850" stroke="#9a7a18"/><rect x="57" y="142.5" width="1" height="6" fill="#9a7a18"/><polygon points="67.60,140.00 66.06,141.27 66.25,143.25 64.27,143.06 63.00,144.60 61.73,143.06 59.75,143.25 59.94,141.27 58.40,140.00 59.94,138.73 59.75,136.75 61.73,136.94 63.00,135.40 64.27,136.94 66.25,136.75 66.06,138.73" fill="#f5c842" stroke="#a07010" stroke-width=".9" stroke-linejoin="round"/><circle cx="63" cy="140" r="1.38" fill="#fff" stroke="#a07010" stroke-width=".6"/><rect x="70" y="155" width="12" height="2" fill="#2a64b0"/><rect x="70" y="159" width="12" height="2" fill="#2a64b0"/><rect x="70" y="163" width="12" height="2" fill="#2a64b0"/><g transform="translate(37,171)"><rect x="4.5" y="0.5" width="8" height="13.5" rx="1" fill="#c4ccd4" stroke="#6a7480"/><rect x="5.5" y="4" width="6" height="1" fill="#6a7480"/><rect x="5.5" y="8" width="6" height="1" fill="#6a7480"/><rect x="6" y="1.5" width="3" height="2" fill="#40a050"/><path d="M0 7.5 v7 l6.5 -3.5z" fill="#3aa84a" stroke="#208030" stroke-width=".5"/></g><g transform="translate(37,189)"><rect x="4.5" y="0.5" width="8" height="13.5" rx="1" fill="#c4ccd4" stroke="#6a7480"/><rect x="5.5" y="4" width="6" height="1" fill="#6a7480"/><rect x="5.5" y="8" width="6" height="1" fill="#6a7480"/><rect x="6" y="1.5" width="3" height="2" fill="#40a050"/><path d="M0 7.5 v7 l6.5 -3.5z" fill="#3aa84a" stroke="#208030" stroke-width=".5"/></g><g transform="translate(387.5,78)"><path d="M0.5 0.5 h7 l3.2 3.2 v9.8 h-10.2z" fill="#f4f8fd" stroke="#a88a40"/><path d="M7.5 0.5 v3.2 h3.2z" fill="#e0c070" stroke="#a88a40" stroke-width=".8"/><rect x="2" y="9.4" width="1.6" height="1.6" fill="#2a5fa0"/><text x="3.2" y="11" font-family="Liberation Sans" font-weight="bold" font-size="11.5" fill="#2a5fa0">c</text></g><path d="M449 81 L458 90 M458 81 L449 90" stroke="#000" stroke-width="0.95"/><g transform="translate(473,78)"><path d="M0.5 0.5 h7 l3.2 3.2 v9.8 h-10.2z" fill="#f4f8fd" stroke="#a88a40"/><path d="M7.5 0.5 v3.2 h3.2z" fill="#e0c070" stroke="#a88a40" stroke-width=".8"/><rect x="2" y="9.4" width="1.6" height="1.6" fill="#2a5fa0"/><text x="3.2" y="11" font-family="Liberation Sans" font-weight="bold" font-size="11.5" fill="#2a5fa0">c</text></g><g transform="translate(606,78)"><path d="M0.5 0.5 h7 l3.2 3.2 v9.8 h-10.2z" fill="#f4f8fd" stroke="#a88a40"/><path d="M7.5 0.5 v3.2 h3.2z" fill="#e0c070" stroke="#a88a40" stroke-width=".8"/><rect x="2" y="9.4" width="1.6" height="1.6" fill="#2a5fa0"/><text x="3.2" y="11" font-family="Liberation Sans" font-weight="bold" font-size="11.5" fill="#2a5fa0">c</text></g><g transform="translate(739,78)"><path d="M0.5 0.5 h7 l3.2 3.2 v9.8 h-10.2z" fill="#f4f8fd" stroke="#a88a40"/><path d="M7.5 0.5 v3.2 h3.2z" fill="#e0c070" stroke="#a88a40" stroke-width=".8"/><rect x="1.8" y="10.2" width="1.5" height="1.5" fill="#2a5fa0"/><text x="3.2" y="11.8" font-family="Liberation Sans" font-weight="bold" font-size="11" fill="#2a5fa0">S</text></g><g transform="translate(865,78)"><path d="M0.5 0.5 h7 l3.2 3.2 v9.8 h-10.2z" fill="#f4f8fd" stroke="#a88a40"/><path d="M7.5 0.5 v3.2 h3.2z" fill="#e0c070" stroke="#a88a40" stroke-width=".8"/><rect x="2" y="9.4" width="1.6" height="1.6" fill="#2a5fa0"/><text x="3.2" y="11" font-family="Liberation Sans" font-weight="bold" font-size="11.5" fill="#2a5fa0">c</text></g><path d="M993 78 l3 2.5 l-3 2.5 M997 78 l3 2.5 l-3 2.5" stroke="#000" stroke-width="1.4" fill="none"/><text x="999.5" y="91" font-family="Liberation Sans" font-size="9" fill="#000">2</text><rect x="1087.5" y="79.5" width="10" height="3" fill="none" stroke="#000" stroke-width="1.1"/><rect x="1110.5" y="79.5" width="10" height="10" fill="none" stroke="#000" stroke-width="1"/><rect x="1110" y="80" width="11" height="1.5" fill="#000"/><text x="1139.5" y="89" font-family="Liberation Sans" font-size="11" fill="#2a6eb8" textLength="18" lengthAdjust="spacingAndGlyphs">(x)=</text><text x="1160" y="89" font-family="Liberation Sans" font-size="12" fill="#000" textLength="16" lengthAdjust="spacingAndGlyphs">V...</text><circle cx="1192.2" cy="82.2" r="3.3" fill="#6aa6dc" stroke="#3a78b8" stroke-width=".8"/><circle cx="1199.2" cy="87.5" r="3.3" fill="#6aa6dc" stroke="#3a78b8" stroke-width=".8"/><text x="1207.5" y="89" font-family="Liberation Sans" font-size="12" fill="#000">B</text><text x="1155" y="263" font-family="Liberation Sans" font-weight="bold" font-size="10" fill="#2c4670" textLength="16" lengthAdjust="spacingAndGlyphs">(x)=</text><text x="1155" y="281" font-family="Liberation Sans" font-weight="bold" font-size="10" fill="#2c4670" textLength="16" lengthAdjust="spacingAndGlyphs">(x)=</text><text x="1155" y="299" font-family="Liberation Sans" font-weight="bold" font-size="10" fill="#2c4670" textLength="16" lengthAdjust="spacingAndGlyphs">(x)=</text><path d="M1159.5 308.5 h4 v4 h4 v4 h-4 v4 h-4 v-4 h-4 v-4 h4z" fill="url(#gp)" stroke="#5a9a30" stroke-width=".9"/><rect x="1109" y="227" width="2" height="17" fill="#6a6a6a"/><rect x="441" y="460" width="397" height="2" fill="#6a6a6a"/><rect x="1119.5" y="153.5" width="8" height="3" fill="none" stroke="#d0d0d0"/><rect x="1119.5" y="156.5" width="8" height="3" fill="none" stroke="#d0d0d0"/><rect x="1119" y="160" width="9" height="1" fill="#3030e0"/><rect x="1119.5" y="162.5" width="8" height="3" fill="none" stroke="#d0d0d0"/><rect x="1119.5" y="165.5" width="8" height="3" fill="none" stroke="#d0d0d0"/><rect x="1119.5" y="175.5" width="8" height="4" fill="#b8b8f0" stroke="#2020e0"/><rect x="1119.5" y="199.5" width="8" height="3" fill="none" stroke="#d4d4d4"/><rect x="1119.5" y="232.5" width="8" height="3" fill="#eef6e4" stroke="#c4dcb0"/><rect x="1119.5" y="286.5" width="8" height="3" fill="none" stroke="#d4d4d4"/><rect x="1119.5" y="379.5" width="8" height="3" fill="none" stroke="#d4d4d4"/><path d="M381 267.5 h3.5 v-2.5 l4 4.5 l-4 4.5 v-2.5 h-3.5z" fill="#5d9ad6" stroke="#1f5aa0" stroke-width=".8"/><circle cx="418.5" cy="449" r="3.5" fill="#fff" stroke="#8090a8" stroke-width=".9"/><rect x="416.5" y="448.5" width="4" height="1" fill="#405070"/><rect x="387.6" y="481.6" width="12" height="9.6" rx="1.5" fill="#f4fbff" stroke="#3a62b0" stroke-width="1.5"/><rect x="390" y="484.5" width="5" height="1.2" fill="#4a5aa0"/><rect x="390" y="487" width="7" height="1.2" fill="#4a5aa0"/><rect x="389" y="493" width="9" height="1.6" fill="#3a62b0"/><rect x="392.5" y="491" width="2" height="2" fill="#3a62b0"/><path d="M458.5 480.5 h12 q-1.5 2 0 5 q1.5 3 0 6 l1.5 3.5 h-13.5z" fill="#f0f6fc" stroke="#8898b8"/><path d="M465 481 v13 M459 487.5 h11" stroke="#a8b8d0" stroke-width=".9"/><circle cx="462" cy="484.2" r="2.6" fill="#e02828"/><path d="M459.8 494 l0.5 -3 l1.7 -2 l1.7 2 l0.5 3z" fill="#f8b020"/><circle cx="546" cy="488" r="6.7" fill="#8aa6d2" stroke="#5a78a8" stroke-width=".8"/><path d="M543.5 484 v8 l6 -4z" fill="#fff"/><rect x="632.6" y="481.6" width="12" height="9.6" fill="#eefaff" stroke="#3a62b0" stroke-width="1.3"/><rect x="635" y="485" width="4" height="1.2" fill="#4a5aa0"/><rect x="635" y="487.5" width="4" height="1.2" fill="#4a5aa0"/><rect x="633" y="493" width="6" height="1.5" fill="#3a62b0"/><path d="M639.5 484 v4 M643.5 485 v3 M636 489 h3 M639 496 v-2 M646 488 h-2" stroke="#1a4a40" stroke-width="1"/><ellipse cx="643" cy="491.5" rx="3.2" ry="4.3" transform="rotate(-35 643 491.5)" fill="#b0d890" stroke="#1a5a50" stroke-width=".9"/><circle cx="640.5" cy="488.5" r="1.4" fill="#50a060" stroke="#1a4a40" stroke-width=".6"/><rect x="762.6" y="481.6" width="8.2" height="12.8" rx="1.6" fill="#b8d0f0" stroke="#3a70c0" stroke-width="1.3"/><rect x="765" y="485" width="3" height="9" fill="#e0ecfa"/><path d="M763.5 484.5 h6.5" stroke="#6a90d0" stroke-width=".8"/><path d="M831 484 L840 493 M840 484 L831 493" stroke="#000" stroke-width="0.95"/><defs><linearGradient id="gp" x1="0" y1="0" x2="0" y2="1"><stop offset="0" stop-color="#e8e858"/><stop offset="1" stop-color="#78c040"/></linearGradient></defs><path d="M651.5 505.5 h4 v4 h4 v4 h-4 v4 h-4 v-4 h-4 v-4 h4z" fill="url(#gp)" stroke="#4a8a3a" stroke-width=".9"/><path d="M673 507 l9 9 M682 507 l-9 9" stroke="#555" stroke-width="3.6" stroke-linecap="round"/><path d="M673 507 l9 9 M682 507 l-9 9" stroke="#888" stroke-width="2" stroke-linecap="round"/><path d="M695 505 l7 7 M702 505 l-7 7" stroke="#999" stroke-width="3" stroke-linecap="round"/><path d="M695 505 l7 7 M702 505 l-7 7" stroke="#e8e8e8" stroke-width="1.6" stroke-linecap="round"/><path d="M699 510 l7.5 7.5 M706.5 510 l-7.5 7.5" stroke="#555" stroke-width="3.4" stroke-linecap="round"/><path d="M699 510 l7.5 7.5 M706.5 510 l-7.5 7.5" stroke="#888" stroke-width="1.8" stroke-linecap="round"/><path d="M408 528 l5 5 l-5 5 l-5 -5z" fill="#6a9ad0" stroke="#3a6aa8" stroke-width=".6"/><path d="M403.5 533 h9" stroke="#c8dcf0" stroke-width=".8"/><path d="M408 546 l5 5 l-5 5 l-5 -5z" fill="#6a9ad0" stroke="#3a6aa8" stroke-width=".6"/><path d="M403.5 551 h9" stroke="#c8dcf0" stroke-width=".8"/><path d="M408 564 l5 5 l-5 5 l-5 -5z" fill="#6a9ad0" stroke="#3a6aa8" stroke-width=".6"/><path d="M403.5 569 h9" stroke="#c8dcf0" stroke-width=".8"/><path d="M925 507.5 L934 516.5 M934 507.5 L925 516.5" stroke="#000" stroke-width="0.95"/><path d="M951.5 506.5 h4 v4 h4 v4 h-4 v4 h-4 v-4 h-4 v-4 h4z" fill="url(#gp)" stroke="#4a8a3a" stroke-width=".9"/></svg>
</body></html>
